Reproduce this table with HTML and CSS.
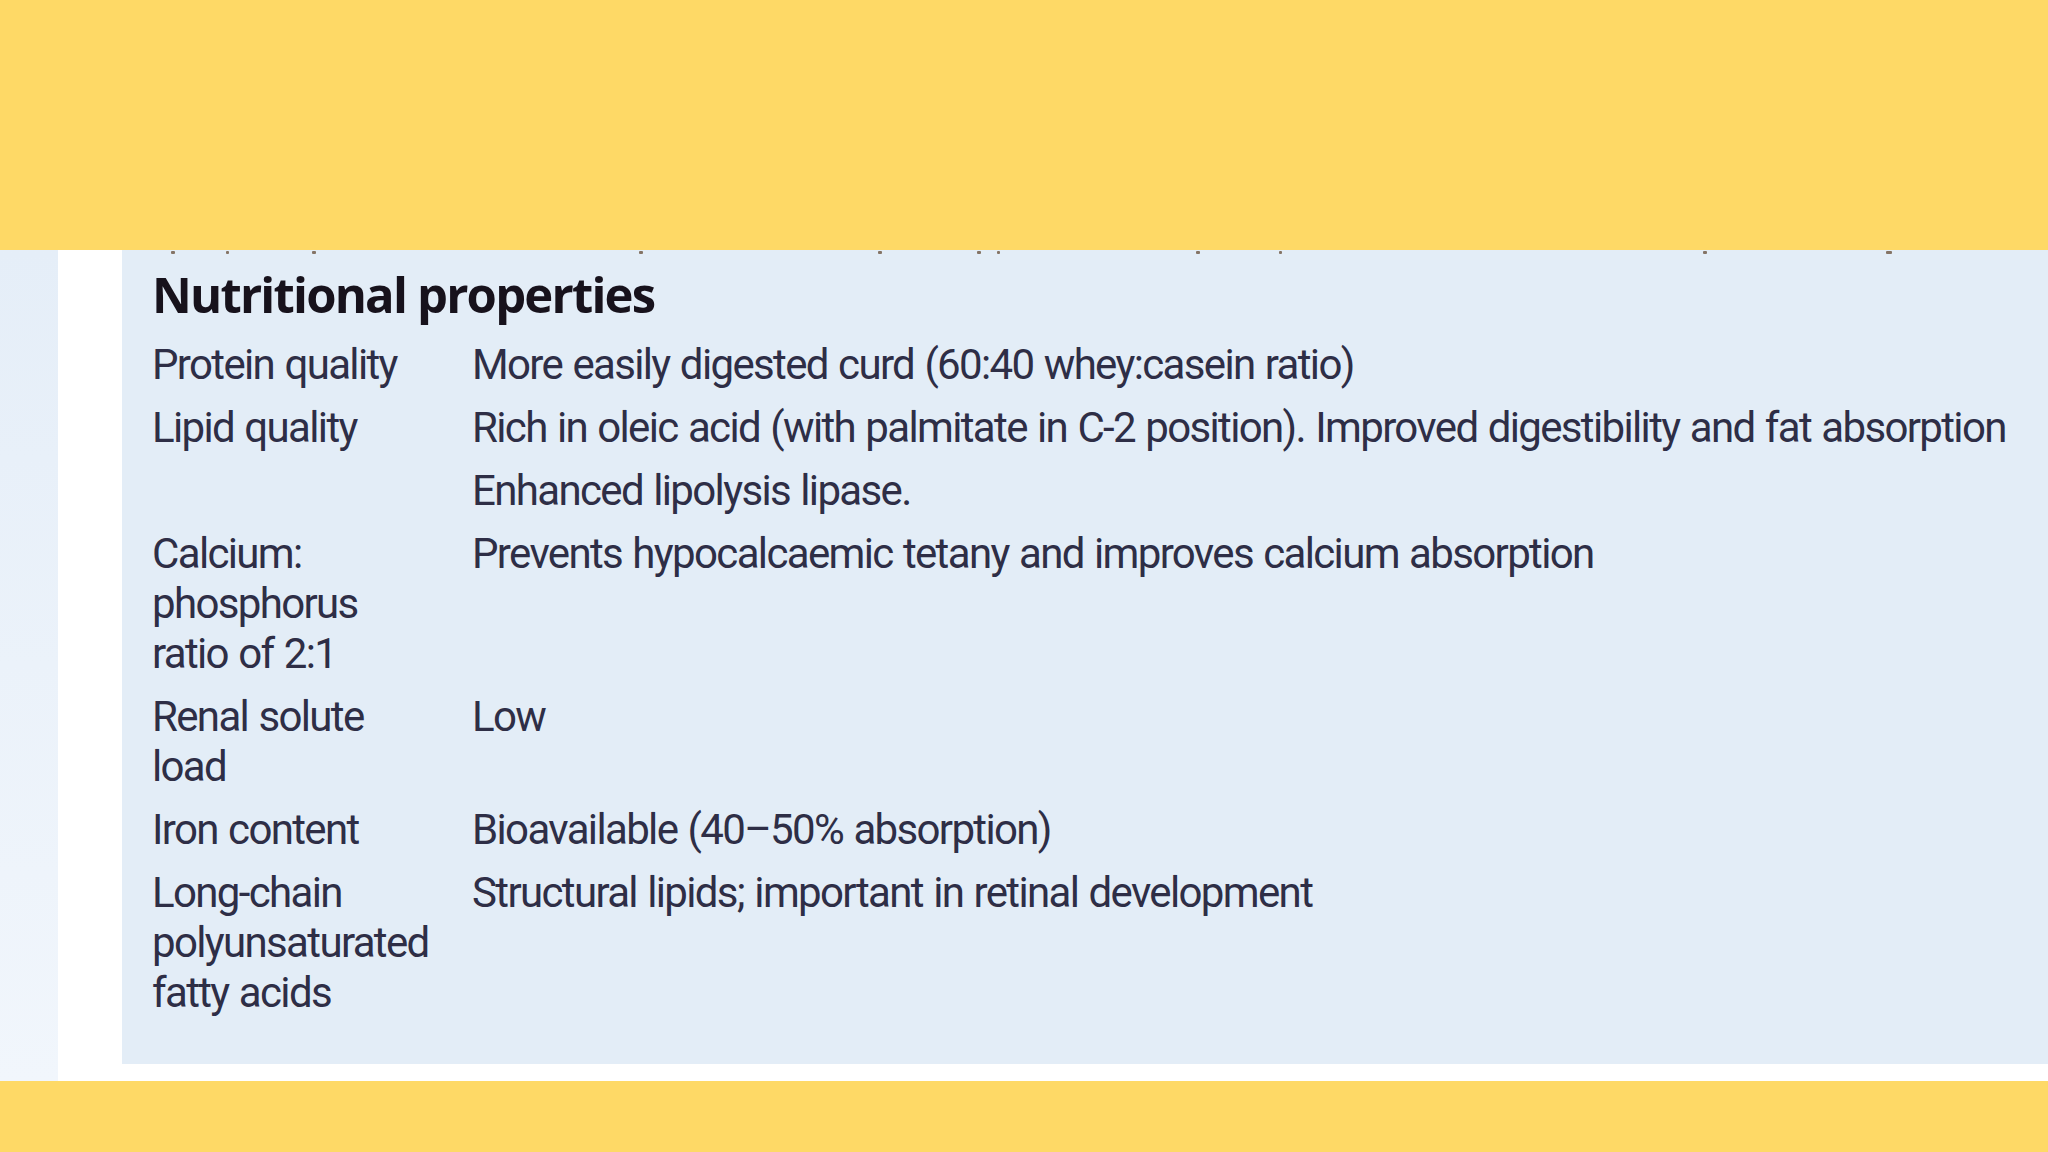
FILE: index.html
```html
<!DOCTYPE html>
<html lang="en">
<head>
<meta charset="utf-8">
<title>Nutritional properties</title>
<link rel="stylesheet" href="styles.css">
</head>
<body>
<div class="band band-top"></div>
<div class="middle">
  <div class="side-strip"></div>
  <div class="gutter"></div>
  <div class="panel-wrap">
    <section class="panel">
      <div class="cut-marks">
        <span class="mark m1"></span><span class="mark m2"></span><span class="mark m3"></span>
        <span class="mark m4"></span><span class="mark m5"></span><span class="mark m6"></span>
        <span class="mark m7"></span><span class="mark m8"></span><span class="mark m9"></span>
        <span class="mark m10"></span><span class="mark m11"></span>
      </div>
      <h2 class="title">Nutritional properties</h2>
      <div class="table">
        <div class="label">Protein quality</div>
        <div class="value">More easily digested curd (60:40 whey:casein ratio)</div>

        <div class="label">Lipid quality</div>
        <div class="value">Rich in oleic acid (with palmitate in C-2 position). Improved digestibility and fat absorption</div>

        <div class="label"></div>
        <div class="value">Enhanced lipolysis lipase.</div>

        <div class="label">Calcium:<br>phosphorus<br>ratio of 2:1</div>
        <div class="value">Prevents hypocalcaemic tetany and improves calcium absorption</div>

        <div class="label">Renal solute<br>load</div>
        <div class="value">Low</div>

        <div class="label">Iron content</div>
        <div class="value">Bioavailable (40–50% absorption)</div>

        <div class="label">Long-chain<br>polyunsaturated<br>fatty acids</div>
        <div class="value">Structural lipids; important in retinal development</div>
      </div>
    </section>
  </div>
</div>
<div class="band band-bottom"></div>
</body>
</html>
```
FILE: styles.css
```css
html, body {
  margin: 0;
  padding: 0;
  background: #ffffff;
}
body {
  width: 2048px;
  height: 1152px;
  overflow: hidden;
  display: flex;
  flex-direction: column;
  font-family: "Open Sans", "Noto Sans", sans-serif;
}
.band {
  background: #fed966;
  flex: none;
}
.band-top {
  height: 250px;
}
.band-bottom {
  height: 71px;
}
.middle {
  height: 831px;
  display: flex;
  flex-direction: row;
}
.side-strip {
  width: 58px;
  flex: none;
  background: linear-gradient(180deg, #e5eef8 0%, #ebf2fa 50%, #f1f6fc 100%);
}
.gutter {
  width: 64px;
  flex: none;
  background: #ffffff;
}
.panel-wrap {
  flex: 1;
  display: flex;
  flex-direction: column;
  padding-bottom: 17px;
  background: #ffffff;
}
.panel {
  flex: 1;
  position: relative;
  background: #e3edf7;
  padding: 14px 0 0 30px;
  box-sizing: border-box;
}
.cut-marks {
  position: absolute;
  top: 0;
  left: 0;
  right: 0;
  height: 6px;
}
.mark {
  position: absolute;
  top: 1px;
  width: 4px;
  height: 3px;
  background: #857466;
  border-radius: 1px;
}
.m1 { left: 49px; }
.m2 { left: 104px; width: 3px; }
.m3 { left: 190px; }
.m4 { left: 517px; }
.m5 { left: 756px; }
.m6 { left: 855px; }
.m7 { left: 875px; width: 3px; }
.m8 { left: 1074px; }
.m9 { left: 1157px; width: 3px; }
.m10 { left: 1581px; }
.m11 { left: 1764px; width: 6px; }
.title {
  margin: 0 0 16px 0;
  font-size: 49px;
  line-height: 60px;
  font-weight: 700;
  letter-spacing: -1.8px;
  color: #17121c;
}
.table {
  display: grid;
  grid-template-columns: 320px 1fr;
  row-gap: 13px;
  font-family: Roboto, "Open Sans", sans-serif;
  font-size: 42px;
  line-height: 50px;
  color: #2e2e46;
  letter-spacing: -1.65px;
  word-spacing: 1.5px;
  white-space: nowrap;
}
.label, .value {
  min-height: 50px;
}
```
